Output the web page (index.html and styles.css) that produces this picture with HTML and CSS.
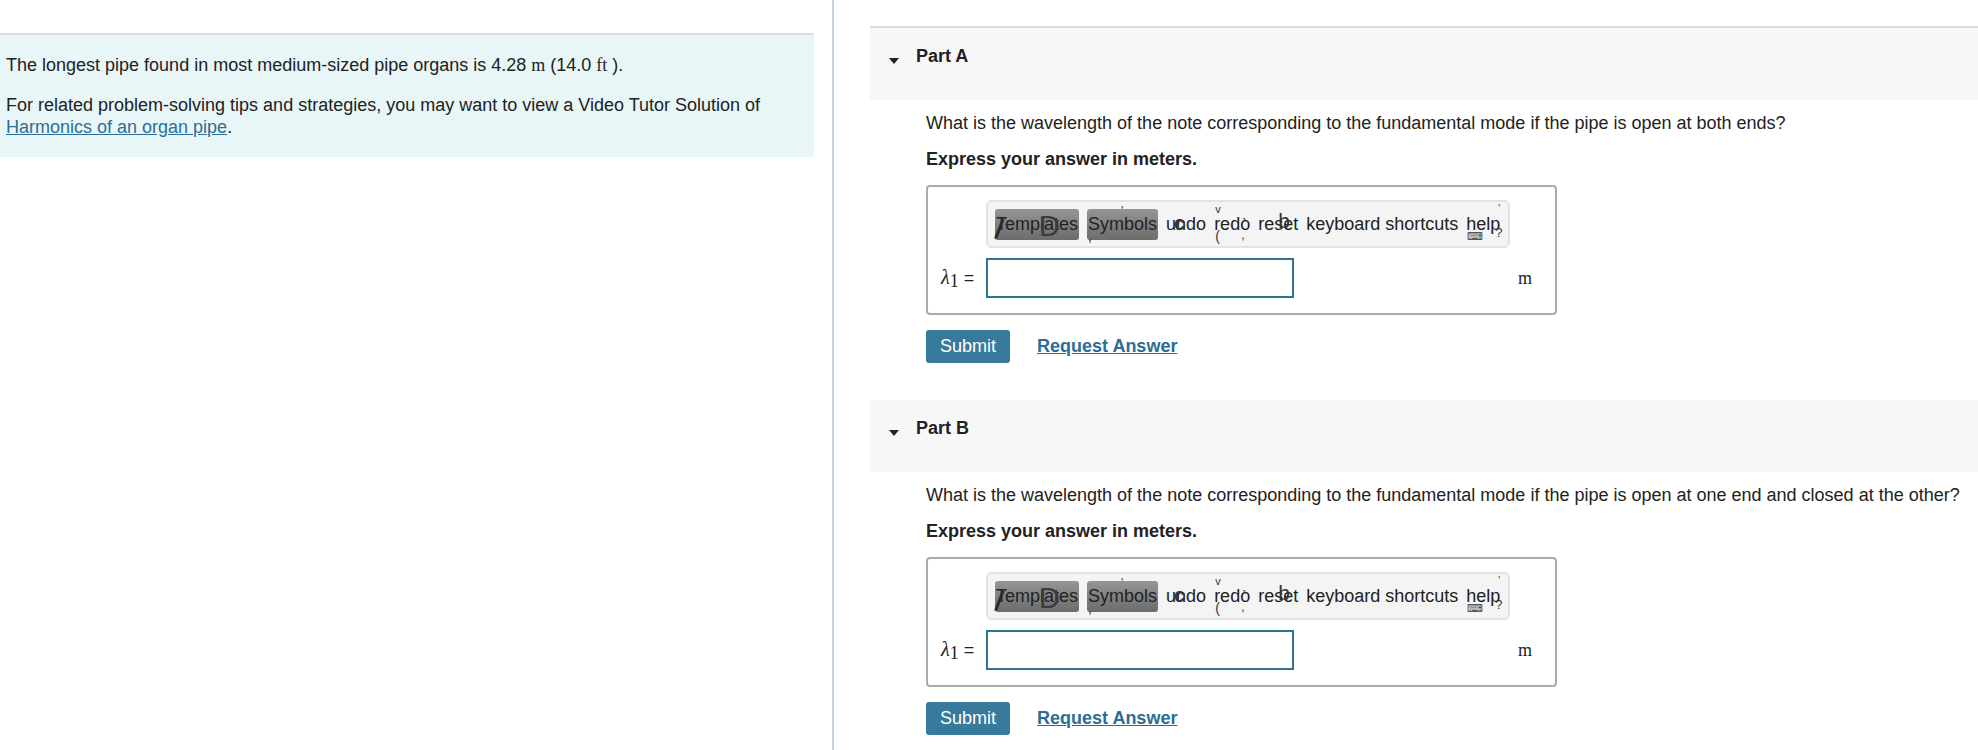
FILE: index.html
```html
<!DOCTYPE html>
<html lang="en">
<head>
<meta charset="utf-8">
<title>Harmonics of an organ pipe</title>
<link rel="stylesheet" href="styles.css">
</head>
<body>
<div class="page">
  <aside class="left">
    <div class="intro">
      <p>The longest pipe found in most medium-sized pipe organs is 4.28 <span class="math">m</span> (14.0 <span class="math">ft</span> ).</p>
      <p>For related problem-solving tips and strategies, you may want to view a Video Tutor Solution of <a href="#" class="link">Harmonics of an organ pipe</a>.</p>
    </div>
  </aside>
  <div class="divider"></div>
  <main class="right">
    <section class="part part-a">
      <header class="part-head"><span class="caret"></span><h2 class="part-title">Part A</h2></header>
      <div class="part-body">
        <p class="question">What is the wavelength of the note corresponding to the fundamental mode if the pipe is open at both ends?</p>
        <p class="express">Express your answer in meters.</p>
        <div class="answer-box">
          <div class="toolbar">
            <span class="tb-btn">Templates<i class="g g-slash">/</i><i class="g g-d">D</i></span>
            <span class="tb-btn">Symbols<i class="g g-tick">'</i><i class="g g-comma">,</i></span>
            <span class="tb-item">undo<i class="g g-undo">c</i></span>
            <span class="tb-item">redo<i class="g g-rv">v</i><i class="g g-rl">(</i><i class="g g-rr">ˎ</i><i class="g g-rc">,</i></span>
            <span class="tb-item">reset<i class="g g-reset">b</i></span>
            <span class="tb-item">keyboard shortcuts</span>
            <span class="tb-item">help<i class="g g-kbd">⌨</i><i class="g g-q">?</i><i class="g g-ht">'</i></span>
          </div>
          <div class="answer-row">
            <span class="label"><span class="lambda">λ</span><span class="sub">1</span> =</span>
            <span class="input"></span>
            <span class="unit">m</span>
          </div>
        </div>
        <div class="actions">
          <button class="submit">Submit</button>
          <a href="#" class="request">Request Answer</a>
        </div>
      </div>
    </section>
    <section class="part part-b">
      <header class="part-head"><span class="caret"></span><h2 class="part-title">Part B</h2></header>
      <div class="part-body">
        <p class="question">What is the wavelength of the note corresponding to the fundamental mode if the pipe is open at one end and closed at the other?</p>
        <p class="express">Express your answer in meters.</p>
        <div class="answer-box">
          <div class="toolbar">
            <span class="tb-btn">Templates<i class="g g-slash">/</i><i class="g g-d">D</i></span>
            <span class="tb-btn">Symbols<i class="g g-tick">'</i><i class="g g-comma">,</i></span>
            <span class="tb-item">undo<i class="g g-undo">c</i></span>
            <span class="tb-item">redo<i class="g g-rv">v</i><i class="g g-rl">(</i><i class="g g-rr">ˎ</i><i class="g g-rc">,</i></span>
            <span class="tb-item">reset<i class="g g-reset">b</i></span>
            <span class="tb-item">keyboard shortcuts</span>
            <span class="tb-item">help<i class="g g-kbd">⌨</i><i class="g g-q">?</i><i class="g g-ht">'</i></span>
          </div>
          <div class="answer-row">
            <span class="label"><span class="lambda">λ</span><span class="sub">1</span> =</span>
            <span class="input"></span>
            <span class="unit">m</span>
          </div>
        </div>
        <div class="actions">
          <button class="submit">Submit</button>
          <a href="#" class="request">Request Answer</a>
        </div>
      </div>
    </section>
  </main>
</div>
</body>
</html>
```

FILE: styles.css
```css
* { box-sizing: border-box; }
html, body { margin: 0; padding: 0; background: #fff; }
body {
  font-family: "Liberation Sans", Arial, Helvetica, sans-serif;
  font-size: 18px;
  line-height: 22.5px;
  color: #222;
  overflow: hidden;
}
.page {
  display: flex;
  min-height: 100vh;
}
.left {
  width: 814px;
  flex: 0 0 814px;
  padding-top: 33px;
}
.intro {
  background: #e8f6f7;
  border-top: 2px solid #dcdcdc;
  padding: 19px 6px 18px;
}
.intro p { margin: 0 0 17px; }
.intro p:last-child { margin-bottom: 0; }
.math { font-family: "Liberation Serif", "DejaVu Serif", serif; }
.link { color: #2c6e96; text-decoration: underline; }
.divider {
  flex: 0 0 2px;
  margin-left: 18px;
  background: #c6d3e3;
}
.right {
  flex: 1;
  margin-left: 36px;
  padding-top: 26px;
}
.part-head {
  display: flex;
  align-items: flex-start;
  background: #f7f7f7;
  height: 72px;
  padding: 17px 0 0 19px;
}
.part-a .part-head {
  border-top: 2px solid #dcdcdc;
  height: 74px;
}
.part-b { margin-top: 37px; }
.caret {
  width: 0;
  height: 0;
  border-left: 5px solid transparent;
  border-right: 5px solid transparent;
  border-top: 6px solid #222;
  margin-top: 13px;
  margin-right: 17px;
}
.part-title {
  margin: 0;
  font-size: 18px;
  line-height: 22.5px;
  font-weight: bold;
  color: #222;
}
.part-body { padding-left: 56px; }
.question { margin: 12px 0 0; }
.express { margin: 13px 0 0; font-weight: bold; }
.answer-box {
  margin-top: 15px;
  width: 631px;
  height: 130px;
  border: 2px solid #ababab;
  border-radius: 4px;
  padding: 13px 23px 13px 13px;
}
.toolbar {
  margin-left: 45px;
  display: inline-flex;
  align-items: center;
  gap: 8px;
  height: 48px;
  padding: 0 8px 0 7px;
  background: #f4f4f4;
  border: 2px solid #e2e2e2;
  border-radius: 6px;
}
.tb-btn, .tb-item {
  position: relative;
  white-space: nowrap;
  color: #222;
}
.tb-btn {
  height: 31px;
  line-height: 31px;
  padding: 0 1px;
  background: linear-gradient(#959595, #6c6c6c);
  border-radius: 3px;
}
.g {
  position: absolute;
  font-style: normal;
  color: #333;
  line-height: 1;
  pointer-events: none;
}
.g-slash { left: 0; top: 7px; font-size: 26px; font-style: italic; font-weight: bold; color: #2a2a2a; }
.g-d { left: 44px; top: 3px; font-size: 29px; color: #3b3b3b; font-weight: normal; }
.g-tick { left: 34px; top: -4px; font-size: 12px; }
.g-comma { left: 1px; top: 20px; font-size: 14px; }
.g-undo { left: 8px; top: 0px; font-size: 20px; font-weight: bold; background: transparent; }
.g-rv { left: 1px; top: -9px; font-size: 11px; }
.g-rl { left: 1px; top: 16px; font-size: 14px; }
.g-rr { left: 28px; top: -8px; font-size: 14px; }
.g-rc { left: 27px; top: 16px; font-size: 12px; }
.g-reset { left: 20px; top: -3px; font-size: 21px; }
.g-kbd { left: 1px; top: 18px; font-size: 11px; }
.g-q { left: 29px; top: 13px; font-size: 13px; }
.g-ht { left: 32px; top: -9px; font-size: 10px; }
.answer-row {
  display: flex;
  align-items: center;
  margin-top: 10px;
  height: 40px;
}
.label {
  width: 45px;
  flex: 0 0 45px;
  white-space: nowrap;
}
.lambda {
  font-family: "Liberation Serif", "DejaVu Serif", serif;
  font-style: italic;
  font-size: 20px;
}
.sub {
  font-family: "Liberation Serif", "DejaVu Serif", serif;
  font-size: 18px;
  position: relative;
  top: 3px;
}
.input {
  display: block;
  width: 308px;
  height: 40px;
  border: 2px solid #2f7395;
  background: #fff;
}
.unit {
  margin-left: auto;
  font-family: "Liberation Serif", "DejaVu Serif", serif;
}
.actions {
  display: flex;
  align-items: center;
  gap: 27px;
  margin-top: 15px;
}
.submit {
  height: 33px;
  padding: 0 14px;
  border: 0;
  border-radius: 3px;
  background: #377a9b;
  color: #fff;
  font-family: "Liberation Sans", Arial, sans-serif;
  font-size: 18px;
  line-height: 33px;
}
.request {
  font-weight: bold;
  color: #2b6d94;
  text-decoration: underline;
}
```
